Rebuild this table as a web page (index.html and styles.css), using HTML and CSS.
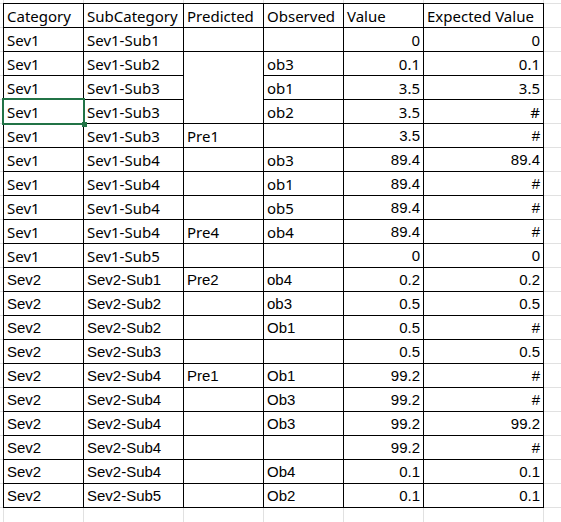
FILE: index.html
```html
<!DOCTYPE html>
<html lang="en">
<head>
  <meta charset="UTF-8" />
  <title>Sheet1</title>
  <link rel="stylesheet" href="styles.css">
</head>
<body>
  <div class="sheet">
    <div class="grid">
      <div class="row apt head">
        <div class="c">Category</div>
        <div class="c">SubCategory</div>
        <div class="c">Predicted</div>
        <div class="c">Observed</div>
        <div class="c">Value</div>
        <div class="c">Expected Value</div>
      </div>

      <div class="row apt">
        <div class="c">Sev1</div><div class="c">Sev1-Sub1</div><div class="c"></div><div class="c"></div>
        <div class="c num">0</div><div class="c num">0</div>
      </div>
      <div class="row apt">
        <div class="c">Sev1</div><div class="c">Sev1-Sub2</div><div class="c merged"></div><div class="c">ob3</div>
        <div class="c num">0.1</div><div class="c num">0.1</div>
      </div>
      <div class="row apt">
        <div class="c">Sev1</div><div class="c">Sev1-Sub3</div><div class="c">ob1</div>
        <div class="c num">3.5</div><div class="c num">3.5</div>
      </div>
      <div class="row apt">
        <div class="c selected">Sev1</div><div class="c">Sev1-Sub3</div><div class="c">ob2</div>
        <div class="c num">3.5</div><div class="c num">#</div>
      </div>
      <div class="row apt">
        <div class="c">Sev1</div><div class="c">Sev1-Sub3</div><div class="c">Pre1</div><div class="c"></div>
        <div class="c num ari">3.5</div><div class="c num ari">#</div>
      </div>
      <div class="row apt">
        <div class="c">Sev1</div><div class="c">Sev1-Sub4</div><div class="c"></div><div class="c">ob3</div>
        <div class="c num ari">89.4</div><div class="c num ari">89.4</div>
      </div>
      <div class="row apt">
        <div class="c">Sev1</div><div class="c">Sev1-Sub4</div><div class="c"></div><div class="c">ob1</div>
        <div class="c num ari">89.4</div><div class="c num ari">#</div>
      </div>
      <div class="row apt">
        <div class="c">Sev1</div><div class="c">Sev1-Sub4</div><div class="c"></div><div class="c">ob5</div>
        <div class="c num ari">89.4</div><div class="c num ari">#</div>
      </div>
      <div class="row apt">
        <div class="c">Sev1</div><div class="c">Sev1-Sub4</div><div class="c">Pre4</div><div class="c">ob4</div>
        <div class="c num ari">89.4</div><div class="c num ari">#</div>
      </div>
      <div class="row apt">
        <div class="c">Sev1</div><div class="c">Sev1-Sub5</div><div class="c"></div><div class="c"></div>
        <div class="c num ari">0</div><div class="c num ari">0</div>
      </div>

      <div class="row">
        <div class="c">Sev2</div><div class="c">Sev2-Sub1</div><div class="c">Pre2</div><div class="c">ob4</div>
        <div class="c num">0.2</div><div class="c num">0.2</div>
      </div>
      <div class="row">
        <div class="c">Sev2</div><div class="c">Sev2-Sub2</div><div class="c"></div><div class="c">ob3</div>
        <div class="c num">0.5</div><div class="c num">0.5</div>
      </div>
      <div class="row">
        <div class="c">Sev2</div><div class="c">Sev2-Sub2</div><div class="c"></div><div class="c">Ob1</div>
        <div class="c num">0.5</div><div class="c num">#</div>
      </div>
      <div class="row">
        <div class="c">Sev2</div><div class="c">Sev2-Sub3</div><div class="c"></div><div class="c"></div>
        <div class="c num">0.5</div><div class="c num">0.5</div>
      </div>
      <div class="row">
        <div class="c">Sev2</div><div class="c">Sev2-Sub4</div><div class="c">Pre1</div><div class="c">Ob1</div>
        <div class="c num">99.2</div><div class="c num">#</div>
      </div>
      <div class="row">
        <div class="c">Sev2</div><div class="c">Sev2-Sub4</div><div class="c"></div><div class="c">Ob3</div>
        <div class="c num">99.2</div><div class="c num">#</div>
      </div>
      <div class="row">
        <div class="c">Sev2</div><div class="c">Sev2-Sub4</div><div class="c"></div><div class="c">Ob3</div>
        <div class="c num">99.2</div><div class="c num">99.2</div>
      </div>
      <div class="row">
        <div class="c">Sev2</div><div class="c">Sev2-Sub4</div><div class="c"></div><div class="c"></div>
        <div class="c num">99.2</div><div class="c num">#</div>
      </div>
      <div class="row">
        <div class="c">Sev2</div><div class="c">Sev2-Sub4</div><div class="c"></div><div class="c">Ob4</div>
        <div class="c num">0.1</div><div class="c num">0.1</div>
      </div>
      <div class="row">
        <div class="c">Sev2</div><div class="c">Sev2-Sub5</div><div class="c"></div><div class="c">Ob2</div>
        <div class="c num">0.1</div><div class="c num">0.1</div>
      </div>
    </div>
  </div>
</body>
</html>
```

FILE: styles.css
```css
body {
  margin: 0;
  background: #fff;
}
.sheet {
  height: 522px;
  padding: 3px 0 0 3px;
  box-sizing: border-box;
  overflow: hidden;
  font-family: "Liberation Sans", Arial, sans-serif;
  font-size: 15px;
  color: #000;
  /* excel gridlines behind the table */
  background-image:
    linear-gradient(to right,
      transparent 0 3px, #e1e1e1 3px 4px,
      transparent 4px 83px, #e1e1e1 83px 84px,
      transparent 84px 183px, #e1e1e1 183px 184px,
      transparent 184px 263px, #e1e1e1 263px 264px,
      transparent 264px 343px, #e1e1e1 343px 344px,
      transparent 344px 423px, #e1e1e1 423px 424px,
      transparent 424px 543px, #e1e1e1 543px 544px,
      transparent 544px),
    repeating-linear-gradient(to bottom,
      transparent 0 3px, #e1e1e1 3px 4px, transparent 4px 24px);
}
.grid {
  display: grid;
  grid-template-columns: 80px 100px 80px 80px 80px 120px;
  grid-auto-rows: 24px;
  width: max-content;
  border-left: 1px solid #000;
  border-top: 1px solid #000;
  background: #fff;
}
.row {
  display: contents;
}
.c {
  box-sizing: border-box;
  border-right: 1px solid #000;
  border-bottom: 1px solid #000;
  padding: 0 3px;
  line-height: 23px;
  white-space: nowrap;
  overflow: hidden;
}
.apt .c {
  font-family: "Noto Sans", sans-serif;
  padding-top: 1px;
  line-height: 22px;
}
.apt .c.ari {
  font-family: "Liberation Sans", Arial, sans-serif;
  padding-top: 0;
  line-height: 23px;
}
.num {
  text-align: right;
}
.merged {
  grid-row: span 3;
}
.selected {
  position: relative;
  overflow: visible;
}
.selected::after {
  content: "";
  position: absolute;
  left: -2px;
  top: -2px;
  right: -2px;
  bottom: -2px;
  border: 2px solid #217346;
}
.selected::before {
  content: "";
  position: absolute;
  right: -4px;
  bottom: -4px;
  width: 5px;
  height: 5px;
  background: #217346;
  z-index: 1;
}
```
